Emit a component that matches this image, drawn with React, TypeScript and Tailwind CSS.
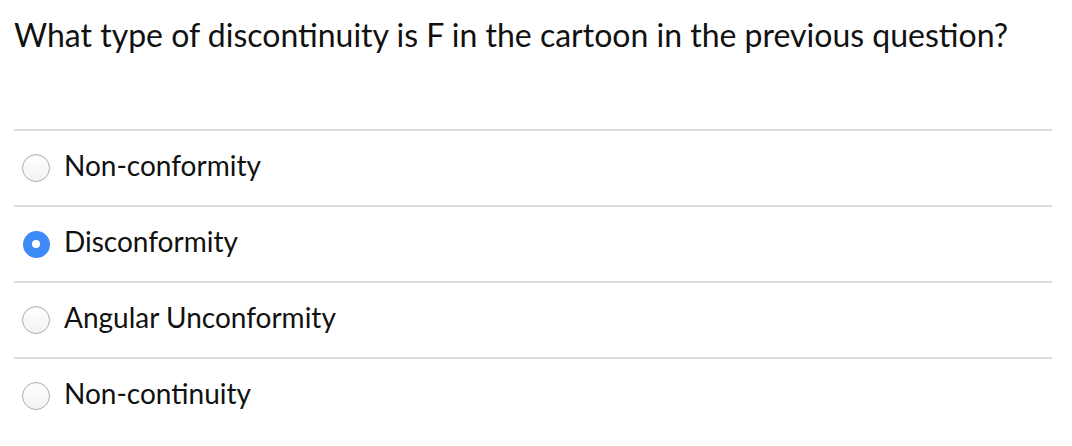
import React from 'react'

const OPTIONS = [
  { id: 'a', label: 'Non-conformity', checked: false },
  { id: 'b', label: 'Disconformity', checked: true },
  { id: 'c', label: 'Angular Unconformity', checked: false },
  { id: 'd', label: 'Non-continuity', checked: false },
]

function Radio({ checked }: { checked: boolean }) {
  if (checked) {
    return (
      <span className="flex h-[27px] w-[27px] shrink-0 items-center justify-center rounded-full bg-[#3d8af7]">
        <span className="h-[8px] w-[8px] rounded-full bg-white" />
      </span>
    )
  }
  return (
    <span className="h-[28px] w-[28px] shrink-0 rounded-full border border-[#b0b0b0] bg-gradient-to-b from-white to-[#f2f2f2] shadow-[inset_0_1px_1px_rgba(0,0,0,0.06)]" />
  )
}

export default function App() {
  return (
    <div className="min-h-[446px] w-[1072px] bg-white px-[14px] pt-[14px] text-[#111] font-['Lato','Liberation_Sans',sans-serif]">
      <div className="text-[32px] leading-[42px] mb-[73px]">
        What type of discontinuity is F in the cartoon in the previous question?
      </div>
      <div className="mr-[6px]">
        {OPTIONS.map((o) => (
          <label key={o.id} className="flex h-[76px] items-center border-t-2 border-[#dddddd]">
            <span className="ml-[8px] mr-[14px] flex w-[28px] justify-center">
              <Radio checked={o.checked} />
            </span>
            <span className="text-[28px] leading-none -mt-[7px]">{o.label}</span>
          </label>
        ))}
      </div>
    </div>
  )
}
